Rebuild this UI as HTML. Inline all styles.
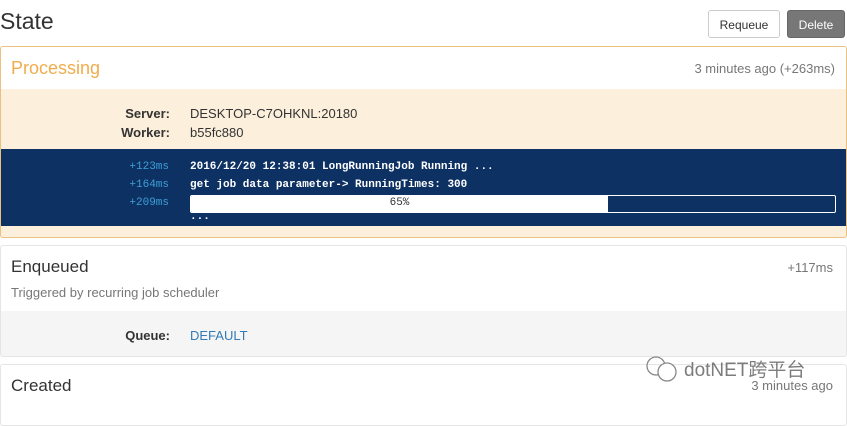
<!DOCTYPE html>
<html><head><style>
body{margin:0;width:847px;height:407px;overflow:hidden;background:#fff;font-family:"Liberation Sans",sans-serif;color:#333;position:relative}
.abs{position:absolute}
h1{position:absolute;left:0;top:8px;margin:0;font-weight:normal;font-size:23px;color:#333}
.btn{position:absolute;top:10px;height:28px;border-radius:3px;font-size:12px;line-height:28px;text-align:center}
.mono{font-family:"Liberation Mono","DejaVu Sans Mono",monospace;font-size:11px}
</style></head><body>
<h1>State</h1>
<div class="btn" style="left:708px;width:72px;border:1px solid #ccc;background:#fff;color:#333;box-sizing:border-box">Requeue</div>
<div class="btn" style="left:787px;width:58px;background:#777;color:#fff;border:1px solid #666;box-sizing:border-box">Delete</div>

<div class="abs" style="left:0;top:46px;width:845px;height:190px;border:1px solid #eac17f;border-radius:3px;overflow:hidden;background:#fcefdc">
  <div class="abs" style="left:0;top:0;width:845px;height:42px;background:#fff"></div>
  <div class="abs" style="left:10px;top:11px;font-size:18px;color:#f0ad4e">Processing</div>
  <div class="abs" style="right:11px;top:14px;font-size:13px;color:#777">3 minutes ago (+263ms)</div>
  <div class="abs" style="right:676px;top:57px;font-size:13px;font-weight:bold;color:#333;text-align:right;line-height:19px">Server:<br>Worker:</div>
  <div class="abs" style="left:189px;top:57px;font-size:13px;color:#333;line-height:19px">DESKTOP-C7OHKNL:20180<br>b55fc880</div>
  <div class="abs" style="left:0;top:102px;width:845px;height:77px;background:#0d3163"></div>
  <div class="abs mono" style="right:677px;top:111px;color:#3da0d8;text-align:right;line-height:18px">+123ms<br>+164ms</div>
  <div class="abs mono" style="left:189px;top:111px;color:#fff;font-weight:bold;line-height:18px">2016/12/20 12:38:01 LongRunningJob Running ...<br>get job data parameter-&gt; RunningTimes: 300</div>
  <div class="abs mono" style="right:677px;top:150px;color:#3da0d8">+209ms</div>
  <div class="abs" style="left:189px;top:148px;width:644px;height:16px;border:1px solid #fff;border-radius:2px;overflow:hidden">
    <div style="width:417px;height:16px;background:#fff;"></div>
    <div class="abs mono" style="left:0;top:1px;width:417px;text-align:center;color:#333">65%</div>
  </div>
  <div class="abs mono" style="left:189px;top:164px;color:#fff;font-weight:bold">...</div>
</div>

<div class="abs" style="left:0;top:245px;width:845px;height:110px;border:1px solid #e5e5e5;border-radius:3px;overflow:hidden;background:#f5f5f5">
  <div class="abs" style="left:0;top:0;width:845px;height:65px;background:#fff"></div>
  <div class="abs" style="left:10px;top:11px;font-size:17px;color:#333">Enqueued</div>
  <div class="abs" style="right:13px;top:14px;font-size:13px;color:#777">+117ms</div>
  <div class="abs" style="left:10px;top:39px;font-size:13px;color:#777">Triggered by recurring job scheduler</div>
  <div class="abs" style="right:676px;top:82px;font-size:13px;font-weight:bold">Queue:</div>
  <div class="abs" style="left:189px;top:82px;font-size:13px;color:#337ab7">DEFAULT</div>
</div>

<div class="abs" style="left:0;top:364px;width:845px;height:60px;border:1px solid #e5e5e5;border-radius:3px;background:#fff">
  <div class="abs" style="left:10px;top:11px;font-size:17px;color:#333">Created</div>
  <div class="abs" style="right:13px;top:13px;font-size:13px;color:#777">3 minutes ago</div>
</div>
<div class="abs" style="left:684px;top:355px;font-size:19px;color:#666;opacity:.85;font-family:'Liberation Sans','Noto Sans CJK SC',sans-serif">dotNET跨平台</div>
<svg class="abs" style="left:643px;top:354px" width="38" height="30"><circle cx="13" cy="12" r="9" fill="none" stroke="#888" stroke-width="1.3"/><circle cx="24" cy="18" r="9" fill="#fff" stroke="#888" stroke-width="1.3"/></svg>
</body></html>
